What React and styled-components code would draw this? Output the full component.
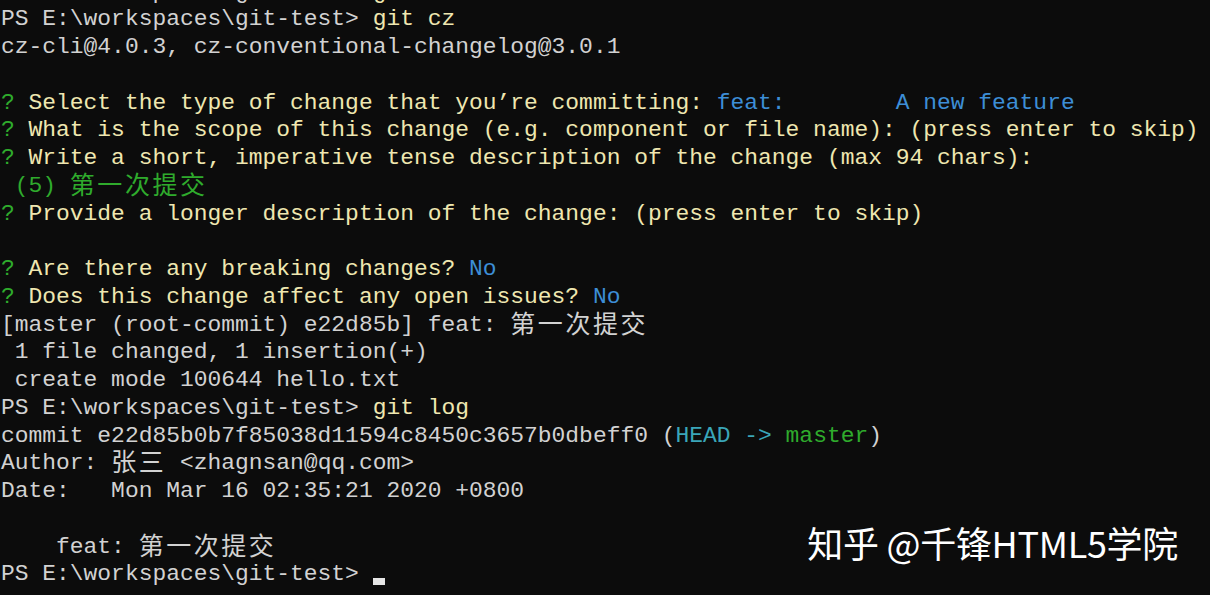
import React from "react";
import styled, { createGlobalStyle } from "styled-components";

const CELL = 13.77;
const LINE = 27.75;

const colors = {
	text: "#d2d2d2",
	cream: "#efe7b0",
	green: "#2fab2c",
	blue: "#3d8ed6",
	cyan: "#3aa6b9",
};

const GlobalStyle = createGlobalStyle`
	html, body {
		margin: 0;
		padding: 0;
		background: #0c0c0c;
	}
	body {
		width: 1210px;
		height: 595px;
		overflow: hidden;
	}
`;

const Screen = styled.div`
	position: relative;
	width: 1210px;
	height: 595px;
	overflow: hidden;
	background: #0c0c0c;
`;

const Terminal = styled.div`
	display: flex;
	flex-direction: column;
	margin-top: -21.4px;
	padding-left: 1px;
	font-family: "Liberation Mono", "Noto Sans CJK SC", monospace;
	font-size: 22.95px;
	color: ${colors.text};
	white-space: pre;
`;

const Line = styled.div`
	height: ${LINE}px;
	line-height: ${LINE}px;
	overflow: visible;
`;

const Span = styled.span`
	color: ${({ $c }) => colors[$c] || colors.text};
`;

const Wide = styled.span`
	font-family: "Noto Sans CJK SC", sans-serif;
	font-size: 25px;
	letter-spacing: ${CELL * 2 - 25}px;
	line-height: 0;
	vertical-align: -2px;
`;

const Cursor = styled.span`
	display: inline-block;
	width: ${CELL - 1}px;
	height: 7px;
	background: #e6e6e6;
	vertical-align: -5px;
`;

const Watermark = styled.div`
	position: absolute;
	right: 32px;
	top: 521px;
	font-family: "Noto Sans CJK SC", sans-serif;
	font-size: 36px;
	line-height: 42px;
	color: #ffffff;
	letter-spacing: -0.3px;
`;

const PROMPT = "PS E:\\workspaces\\git-test> ";

function Prompt({ cmd, children }) {
	return (
		<Line>
			<Span>{PROMPT}</Span>
			{cmd && <Span $c="cream">{cmd}</Span>}
			{children}
		</Line>
	);
}

function Question({ text, answer }) {
	return (
		<Line>
			<Span $c="green">?</Span>
			<Span $c="cream"> {text}</Span>
			{answer && <Span $c="blue">{answer}</Span>}
		</Line>
	);
}

export default function App() {
	return (
		<Screen>
			<GlobalStyle />
			<Terminal>
				<Prompt cmd="git add ." />
				<Prompt cmd="git cz" />
				<Line>cz-cli@4.0.3, cz-conventional-changelog@3.0.1</Line>
				<Line />
				<Question text="Select the type of change that you’re committing: " answer="feat:        A new feature" />
				<Question text="What is the scope of this change (e.g. component or file name): (press enter to skip)" />
				<Question text="Write a short, imperative tense description of the change (max 94 chars):" />
				<Line>
					<Span $c="green">
						{" (5) "}
						<Wide>第一次提交</Wide>
					</Span>
				</Line>
				<Question text="Provide a longer description of the change: (press enter to skip)" />
				<Line />
				<Question text="Are there any breaking changes? " answer="No" />
				<Question text="Does this change affect any open issues? " answer="No" />
				<Line>
					{"[master (root-commit) e22d85b] feat: "}
					<Wide>第一次提交</Wide>
				</Line>
				<Line> 1 file changed, 1 insertion(+)</Line>
				<Line> create mode 100644 hello.txt</Line>
				<Prompt cmd="git log" />
				<Line>
					commit e22d85b0b7f85038d11594c8450c3657b0dbeff0 (<Span $c="cyan">HEAD -&gt; </Span>
					<Span $c="green">master</Span>)
				</Line>
				<Line>
					{"Author: "}
					<Wide>张三</Wide>
					{" <zhagnsan@qq.com>"}
				</Line>
				<Line>Date:   Mon Mar 16 02:35:21 2020 +0800</Line>
				<Line />
				<Line>
					{"    feat: "}
					<Wide>第一次提交</Wide>
				</Line>
				<Prompt>
					<Cursor />
				</Prompt>
			</Terminal>
			<Watermark>知乎 @千锋HTML5学院</Watermark>
		</Screen>
	);
}
